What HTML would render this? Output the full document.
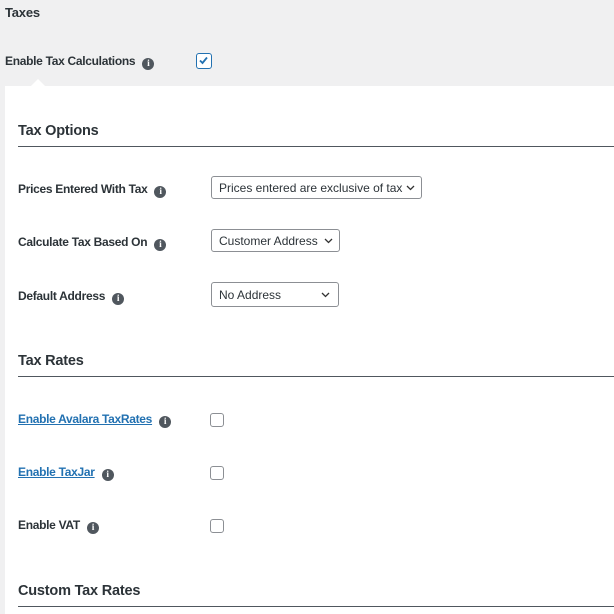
<!DOCTYPE html>
<html><head><style>
body{margin:0;width:614px;height:614px;background:#f0f0f1;position:relative;overflow:hidden;font-family:"Liberation Sans",sans-serif;color:#1d2327}
.a{position:absolute;white-space:nowrap}
.lbl{font-size:12px;font-weight:bold;letter-spacing:-0.3px;line-height:14px;color:#2c3338}
.h{font-size:14.5px;font-weight:bold;letter-spacing:-0.2px;line-height:18px;color:#2c3338}
.line{position:absolute;left:18px;right:0;height:1px;background:#50575e}
.i{display:inline-block;width:12px;height:12px;border-radius:50%;background:#50575e;color:#fff;font-size:9.5px;font-weight:bold;text-align:center;line-height:12px;vertical-align:-1px;margin-left:7px;font-family:"Liberation Serif",serif}
.sel{position:absolute;height:23px;border:1px solid #8c8f94;border-radius:3px;background:#fff;font-size:12px;line-height:23px;padding-left:7px;box-sizing:border-box;color:#2c3338}
.sel svg{position:absolute;right:6px;top:8px}
.cb{position:absolute;width:14px;height:14px;border:1px solid #8c8f94;border-radius:3px;background:#fff;box-sizing:border-box}
a{color:#2271b1;text-decoration:underline}
</style></head><body>
<div class="a h" style="left:5px;top:4px;font-size:13px">Taxes</div>
<div class="a lbl" style="left:5px;top:54px">Enable Tax Calculations<span class="i">i</span></div>
<div class="cb" style="left:196px;top:53px;width:16px;height:16px;border:1.5px solid #2271b1;border-radius:3px">
<svg width="13" height="13" viewBox="0 0 13 13" style="position:absolute;left:0;top:0"><path d="M3 6.5l2.5 2.5 4.5-5.5" stroke="#2271b1" stroke-width="1.8" fill="none"/></svg></div>
<div style="position:absolute;left:5px;top:86px;right:0;bottom:0;background:#fff"></div>
<div style="position:absolute;left:31px;top:79px;width:0;height:0;border-left:7px solid transparent;border-right:7px solid transparent;border-bottom:7px solid #fff"></div>

<div class="a h" style="left:18px;top:122px">Tax Options</div>
<div class="line" style="top:146px"></div>
<div class="a lbl" style="left:18px;top:182px">Prices Entered With Tax<span class="i">i</span></div>
<div class="sel" style="left:211px;top:176px;width:211px">Prices entered are exclusive of tax<svg width="9" height="6"><path d="M1 1l3.5 3.5L8 1" stroke="#333" stroke-width="1.3" fill="none"/></svg></div>
<div class="a lbl" style="left:18px;top:235px">Calculate Tax Based On<span class="i">i</span></div>
<div class="sel" style="left:211px;top:229px;width:129px">Customer Address<svg width="9" height="6"><path d="M1 1l3.5 3.5L8 1" stroke="#333" stroke-width="1.3" fill="none"/></svg></div>
<div class="a lbl" style="left:18px;top:289px">Default Address<span class="i">i</span></div>
<div class="sel" style="left:211px;top:282px;width:128px;height:25px;line-height:25px">No Address<svg width="9" height="6" style="top:9px;right:8px"><path d="M1 1l3.5 3.5L8 1" stroke="#333" stroke-width="1.3" fill="none"/></svg></div>

<div class="a h" style="left:18px;top:352px">Tax Rates</div>
<div class="line" style="top:376px"></div>
<div class="a lbl" style="left:18px;top:412px"><a>Enable Avalara TaxRates</a><span class="i">i</span></div>
<div class="cb" style="left:210px;top:413px"></div>
<div class="a lbl" style="left:18px;top:465px"><a>Enable TaxJar</a><span class="i">i</span></div>
<div class="cb" style="left:210px;top:466px"></div>
<div class="a lbl" style="left:18px;top:518px">Enable VAT<span class="i">i</span></div>
<div class="cb" style="left:210px;top:519px"></div>

<div class="a h" style="left:18px;top:582px">Custom Tax Rates</div>
<div class="line" style="top:606px"></div>
</body></html>
